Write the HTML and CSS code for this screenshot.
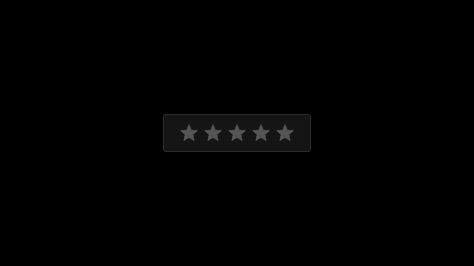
FILE: index.html
```html
<!DOCTYPE html>
<html>
<head>
<meta charset="utf-8">
<link rel="stylesheet" href="styles.css">
</head>
<body>
<div class="stage">
  <div class="rating">
    <svg class="star" viewBox="0 0 24 24"><path d="M12 17.27L18.18 21l-1.64-7.03L22 9.24l-7.19-.61L12 2 9.19 8.63 2 9.24l5.46 4.73L5.82 21z"/></svg>
    <svg class="star" viewBox="0 0 24 24"><path d="M12 17.27L18.18 21l-1.64-7.03L22 9.24l-7.19-.61L12 2 9.19 8.63 2 9.24l5.46 4.73L5.82 21z"/></svg>
    <svg class="star" viewBox="0 0 24 24"><path d="M12 17.27L18.18 21l-1.64-7.03L22 9.24l-7.19-.61L12 2 9.19 8.63 2 9.24l5.46 4.73L5.82 21z"/></svg>
    <svg class="star" viewBox="0 0 24 24"><path d="M12 17.27L18.18 21l-1.64-7.03L22 9.24l-7.19-.61L12 2 9.19 8.63 2 9.24l5.46 4.73L5.82 21z"/></svg>
    <svg class="star" viewBox="0 0 24 24"><path d="M12 17.27L18.18 21l-1.64-7.03L22 9.24l-7.19-.61L12 2 9.19 8.63 2 9.24l5.46 4.73L5.82 21z"/></svg>
  </div>
</div>
</body>
</html>
```
FILE: styles.css
```css
html, body {
  margin: 0;
  padding: 0;
  background: #000;
  font-family: "Liberation Sans", Arial, sans-serif;
}
.stage {
  width: 474px;
  height: 266px;
  display: flex;
  align-items: center;
  justify-content: center;
}
.rating {
  display: flex;
  gap: 4px;
  padding: 8px 15px;
  background: #151515;
  border: 1px solid #2b2b2b;
  border-radius: 3px;
}
.star {
  width: 20px;
  height: 20px;
  display: block;
  fill: #555;
  stroke: #555;
  stroke-width: 1;
  stroke-linejoin: round;
}
```
